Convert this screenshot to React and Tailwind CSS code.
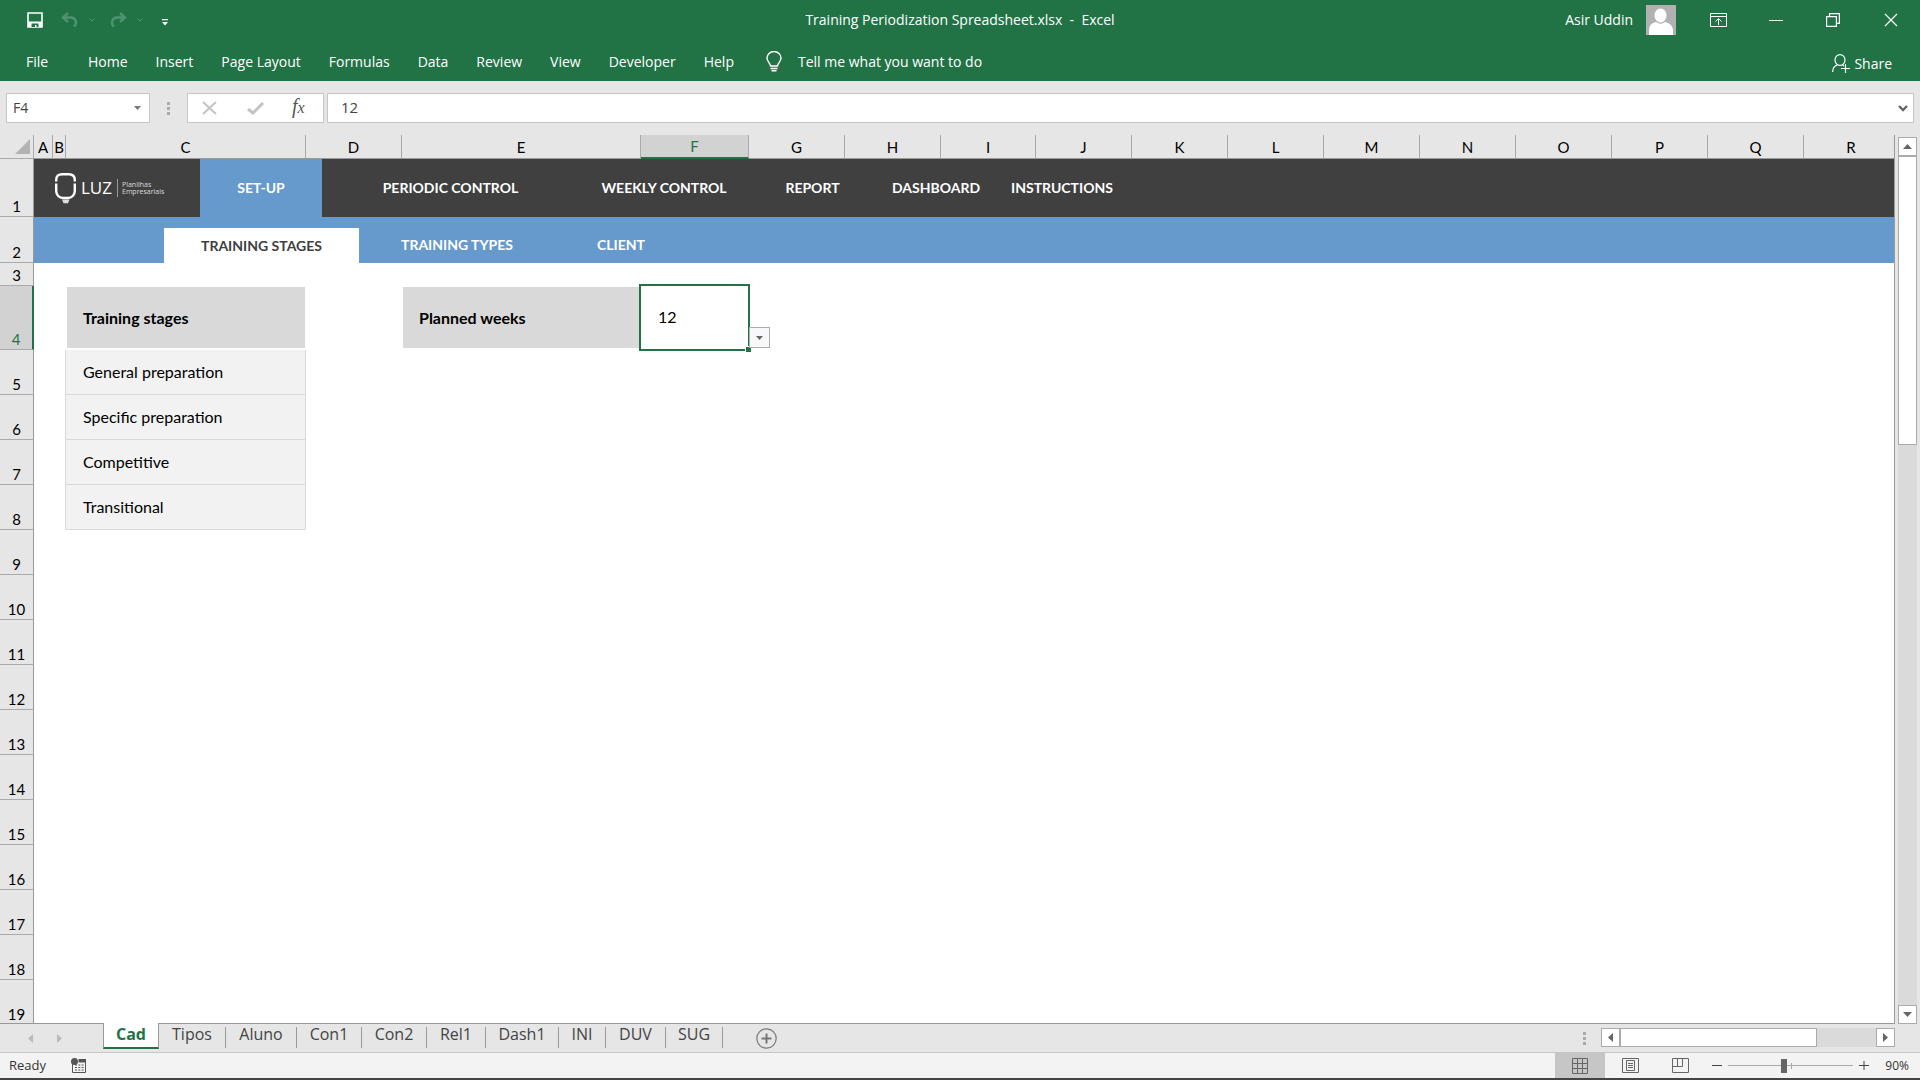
import { useState } from "react";

const menuItems = ["Home", "Insert", "Page Layout", "Formulas", "Data", "Review", "View", "Developer", "Help"];

const columns = [
  { name: "A", width: "w-[19px]" },
  { name: "B", width: "w-[13px]" },
  { name: "C", width: "w-[240px]" },
  { name: "D", width: "w-[96px]" },
  { name: "E", width: "w-[239px]" },
  { name: "F", width: "w-[108px]" },
  { name: "G", width: "w-[96px]" },
  { name: "H", width: "w-[96px]" },
  { name: "I", width: "w-[95px]" },
  { name: "J", width: "w-[96px]" },
  { name: "K", width: "w-[96px]" },
  { name: "L", width: "w-[96px]" },
  { name: "M", width: "w-[96px]" },
  { name: "N", width: "w-[96px]" },
  { name: "O", width: "w-[96px]" },
  { name: "P", width: "w-[96px]" },
  { name: "Q", width: "w-[96px]" },
  { name: "R", width: "" },
];

const mainNav = [
  { label: "SET-UP", className: "w-[122px] bg-[#6699cc]" },
  { label: "PERIODIC CONTROL", className: "w-[257px]" },
  { label: "WEEKLY CONTROL", className: "w-[170px]" },
  { label: "REPORT", className: "w-[127px]" },
  { label: "DASHBOARD", className: "w-[120px]" },
  { label: "INSTRUCTIONS", className: "w-[132px]" },
];

const stages = ["General preparation", "Specific preparation", "Competitive", "Transitional"];

const emptyRows = [9, 10, 11, 12, 13, 14, 15, 16, 17, 18, 19];

const sheets = [
  { name: "Tipos", width: "w-[67px]" },
  { name: "Aluno", width: "w-[71px]" },
  { name: "Con1", width: "w-[65px]" },
  { name: "Con2", width: "w-[65px]" },
  { name: "Rel1", width: "w-[59px]" },
  { name: "Dash1", width: "w-[73px]" },
  { name: "INI", width: "w-[47px]" },
  { name: "DUV", width: "w-[60px]" },
  { name: "SUG", width: "w-[57px]" },
];

const App = () => {
  return (
    <div className="flex h-screen w-full flex-col overflow-hidden bg-[#e6e6e6] font-['Open_Sans',sans-serif] text-sm text-black">
      <TitleBar />
      <Ribbon />
      <FormulaBar />
      <div className="flex min-h-0 flex-1">
        <div className="min-w-0 flex-1 overflow-hidden border-r border-b border-[#999] bg-white">
          <Sheet />
        </div>
        <VerticalScroll />
      </div>
      <SheetTabs />
      <StatusBar />
    </div>
  );
};

const TitleBar = () => (
  <header className="grid h-10 grid-cols-[1fr_auto_1fr] items-center bg-[#217346] text-white">
    {/* Quick access */}
    <div className="flex items-center pl-[27px]">
      <button type="button" aria-label="Save">
        <svg width="16" height="16" viewBox="0 0 16 16" className="block">
          <path d="M1 1h14v14H1z" fill="none" stroke="#fff" strokeWidth="1.6" />
          <path d="M1 9.5h14V15H1z" fill="#fff" />
          <path d="M4.5 11.5h7V15h-2v-2H8v2H4.5z" fill="#217346" />
        </svg>
      </button>
      <button type="button" aria-label="Undo" className="ml-[18px]">
        <svg width="18" height="16" viewBox="0 0 18 16" className="block" fill="none" stroke="#4f9270" strokeWidth="2.4">
          <path d="M7 1 2 5.5 7 10M2.5 5.5H10a5 5 0 0 1 3 9" />
        </svg>
      </button>
      <SmallChevron />
      <button type="button" aria-label="Redo" className="ml-[14px]">
        <svg width="18" height="16" viewBox="0 0 18 16" className="block" fill="none" stroke="#4f9270" strokeWidth="2.4">
          <path d="m11 1 5 4.5L11 10M15.5 5.5H8a5 5 0 0 0-3 9" />
        </svg>
      </button>
      <SmallChevron />
      <button type="button" aria-label="Customize Quick Access Toolbar" className="ml-[19px]">
        <svg width="6" height="7" viewBox="0 0 6 7" className="mt-1 block" fill="#fff">
          <path d="M0 0h6v1.2H0zM0 3h6L3 6.5z" />
        </svg>
      </button>
    </div>
    <h1 className="whitespace-pre">Training Periodization Spreadsheet.xlsx  -  Excel</h1>
    <div className="flex items-center justify-end pr-[22px]">
      <span>Asir Uddin</span>
      <svg width="30" height="30" viewBox="0 0 30 30" className="ml-[13px]">
        <path d="M0 0h30v30H0z" fill="#b1b1b1" />
        <ellipse cx="14.5" cy="10.5" rx="6" ry="7" fill="#fff" />
        <path d="M3 30v-4c0-5 2-8 7-9q4.500 3.500 9 0c5 1 8 4 8 9v4z" fill="#fff" />
      </svg>
      <button type="button" aria-label="Ribbon Display Options" className="ml-[34px]">
        <svg width="17" height="14" viewBox="0 0 17 14" className="block" fill="none" stroke="#fff">
          <path d="M.5.5h16v13H.5zM.5 3.5h16M8.500 12V6M5.500 8.500l3-3 3 3" />
        </svg>
      </button>
      <button type="button" aria-label="Minimize" className="ml-[42px]">
        <svg width="14" height="14" viewBox="0 0 14 14" className="block" stroke="#fff">
          <path d="M0 7.5h14" />
        </svg>
      </button>
      <button type="button" aria-label="Restore Down" className="ml-[43px]">
        <svg width="14" height="14" viewBox="0 0 14 14" className="block" fill="none" stroke="#fff" strokeWidth="1.2">
          <path d="M.6 3.6h9.800v9.800H.6zM3.500 3.600v-3h9.900v9.800h-3" />
        </svg>
      </button>
      <button type="button" aria-label="Close" className="ml-[44px]">
        <svg width="14" height="14" viewBox="0 0 14 14" className="block" stroke="#fff" strokeWidth="1.2">
          <path d="m1 1 12 12M13 1 1 13" />
        </svg>
      </button>
    </div>
  </header>
);

const SmallChevron = () => (
  <svg width="6" height="4" viewBox="0 0 6 4" className="ml-[10px]" fill="none" stroke="#4f9270">
    <path d="m.5.5 2.500 2.500L5.500.5" />
  </svg>
);

const Ribbon = () => (
  <nav className="flex h-[41px] items-center bg-[#217346] pt-[2px] text-white">
    <button type="button" className="w-[74px] text-center">File</button>
    <div className="ml-[14px] flex gap-7">
      {menuItems.map((item) => (
        <button type="button" key={item} className="whitespace-nowrap">
          {item}
        </button>
      ))}
    </div>
    <button type="button" className="ml-8 flex items-center gap-4 whitespace-nowrap">
      <svg width="16" height="21" viewBox="0 0 16 21" fill="none" stroke="#fff" strokeWidth="1.4">
        <path d="M4.500 15c0-3-3.500-4-3.500-8a7 6.500 0 0 1 14 0c0 4-3.500 5-3.500 8zM4.500 17.500h7M5.500 19.800h5" />
      </svg>
      Tell me what you want to do
    </button>
    <button type="button" className="mr-7 ml-auto flex items-center gap-1 pt-1">
      <svg width="18" height="19" viewBox="0 0 18 19" fill="none" stroke="#fff" strokeWidth="1.2">
        <ellipse cx="8" cy="6" rx="5" ry="5.4" />
        <path d="M.6 18c0-4 2-6 4.800-7.200M10.500 11l1.500 1M13.500 10v9M9 14.500h9" />
      </svg>
      Share
    </button>
  </nav>
);

const FormulaBar = () => {
  const [value, setValue] = useState("12");

  return (
    <div className="flex h-[54px] items-center px-[6px] text-[#444]">
      <div className="flex h-[30px] w-36 items-center border border-[#c6c6c6] bg-white pr-2">
        <input aria-label="Name Box" defaultValue="F4" className="w-full min-w-0 pl-[6px] outline-none" />
        <button type="button" aria-label="Open name list">
          <svg width="7" height="4" viewBox="0 0 7 4" fill="#777">
            <path d="M0 0h7L3.500 4z" />
          </svg>
        </button>
      </div>
      <Dots className="ml-[17px]" />
      <div className="ml-[17px] flex h-[30px] w-[137px] items-center border border-[#c6c6c6] bg-white pl-[14px]">
        <button type="button" aria-label="Cancel">
          <svg width="15" height="14" viewBox="0 0 15 14" stroke="#c3c3c3" strokeWidth="2" className="block">
            <path d="m1 1 13 12M14 1 1 13" />
          </svg>
        </button>
        <button type="button" aria-label="Enter" className="ml-[30px]">
          <svg width="17" height="13" viewBox="0 0 17 13" fill="none" stroke="#c3c3c3" strokeWidth="3" className="block">
            <path d="m1 7 5 4L16 1" />
          </svg>
        </button>
        <button
          type="button"
          aria-label="Insert Function"
          className="ml-7 font-['Liberation_Serif',serif] text-xl leading-5 text-[#555] italic"
        >
          f<sub className="bottom-0 text-base">x</sub>
        </button>
      </div>
      <div className="ml-[3px] flex h-[30px] min-w-0 flex-1 items-center border border-[#c6c6c6] bg-white pr-[5px]">
        <input
          aria-label="Formula Bar"
          value={value}
          onChange={(e) => setValue(e.target.value)}
          className="min-w-0 flex-1 pl-[13px] text-[15px] outline-none"
        />
        <button type="button" aria-label="Expand Formula Bar">
          <svg width="10" height="7" viewBox="0 0 10 7" fill="none" stroke="#666" strokeWidth="2.4" className="block">
            <path d="m1 1 4 4 4-4" />
          </svg>
        </button>
      </div>
    </div>
  );
};

const Dots = ({ className }) => (
  <svg width="3" height="13" viewBox="0 0 3 13" fill="#aaa" className={className}>
    <path d="M0 0h3v3H0zM0 5h3v3H0zM0 10h3v3H0z" />
  </svg>
);

const Sheet = () => (
  <table className="w-full table-fixed border-separate border-spacing-0 font-[Lato,sans-serif] text-base leading-5">
    <colgroup>
      <col className="w-[34px]" />
      {columns.map((col) => (
        <col key={col.name} className={col.width} />
      ))}
    </colgroup>
    <thead>
      <tr className="h-6 bg-[#e6e6e6] text-[15px]">
        <th className="border-r border-b border-[#aaa] p-0">
          <svg width="15" height="15" viewBox="0 0 15 15" fill="#b3b3b3" className="mr-[3px] ml-auto block">
            <path d="M15 0v15H0z" />
          </svg>
        </th>
        {columns.map((col) => (
          <th
            key={col.name}
            scope="col"
            className={
              col.name === "F"
                ? "border-r border-b-2 border-r-[#aaa] border-b-[#217346] bg-[#d2d2d2] p-0 font-normal text-[#217346]"
                : "border-b border-[#999] p-0 font-normal not-last:border-r not-last:border-r-[#aaa] last:pl-1"
            }
          >
            {col.name}
          </th>
        ))}
      </tr>
    </thead>
    <tbody>
      <tr className="h-[58px]">
        <RowHeader number={1} />
        <td colSpan={18} className="bg-[#404040] p-0">
          <nav className="flex h-[58px] text-sm font-bold text-white">
            <Logo />
            {mainNav.map((item) => (
              <a
                key={item.label}
                href="#"
                className={`flex shrink-0 items-center justify-center whitespace-nowrap ${item.className}`}
              >
                {item.label}
              </a>
            ))}
          </nav>
        </td>
      </tr>
      <tr className="h-[46px]">
        <RowHeader number={2} />
        <td colSpan={18} className="bg-[#6699cc] p-0">
          <nav className="flex h-[46px] items-end pl-[130px] text-sm font-bold text-white">
            <a href="#" className="flex h-[35px] w-[195px] items-center justify-center bg-white text-[#404040]">
              TRAINING STAGES
            </a>
            <a href="#" className="flex h-[35px] w-[196px] items-center justify-center pb-px">
              TRAINING TYPES
            </a>
            <a href="#" className="flex h-[35px] w-[132px] items-center justify-center pb-px">
              CLIENT
            </a>
          </nav>
        </td>
      </tr>
      <tr className="h-[23px]">
        <RowHeader number={3} />
        <td colSpan={18} />
      </tr>
      <tr className="h-16">
        <RowHeader number={4} active />
        <td colSpan={2} />
        <td className="px-px pt-px pb-[2px] align-top">
          <div className="flex h-[61px] items-center bg-[#d9d9d9] pl-4 font-bold">Training stages</div>
        </td>
        <td />
        <td className="pt-px pr-0 pb-[2px] pl-px align-top">
          <div className="flex h-[61px] items-center bg-[#d9d9d9] pl-4 font-bold">Planned weeks</div>
        </td>
        <td className="relative pt-0 pr-0 pb-[2px] pl-[17px]">
          12
          {/* Selection frame, fill handle and list button */}
          <div className="pointer-events-none absolute -top-[2px] -right-px -bottom-px -left-[2px] border-2 border-[#217346]" />
          <div className="absolute -right-[2px] -bottom-[2px] size-[6px] border-t border-l border-white bg-[#217346]" />
          <button
            type="button"
            aria-label="Choose planned weeks"
            className="absolute bottom-[2px] left-full flex size-[21px] items-center justify-center border border-[#ababab] bg-[#f8f8fa]"
          >
            <svg width="7" height="4" viewBox="0 0 7 4" fill="#666">
              <path d="M0 0h7L3.500 4z" />
            </svg>
          </button>
        </td>
        <td colSpan={12} />
      </tr>
      {stages.map((stage, i) => (
        <tr key={stage} className="h-[45px]">
          <RowHeader number={i + 5} />
          <td colSpan={2} className="border-r border-[#d9d9d9]" />
          <td className="border-r border-b border-[#d9d9d9] bg-[#f2f2f2] py-0 pr-0 pl-[17px]">{stage}</td>
          <td colSpan={15} />
        </tr>
      ))}
      {emptyRows.map((n) => (
        <tr key={n} className="h-[45px]">
          <RowHeader number={n} />
          <td colSpan={18} />
        </tr>
      ))}
    </tbody>
  </table>
);

const RowHeader = ({ number, active }) => (
  <th
    scope="row"
    className={
      active
        ? "border-r-2 border-b border-r-[#217346] border-b-[#aaa] bg-[#d2d2d2] p-0 align-bottom text-[15px] font-normal text-[#217346]"
        : "border-r border-b border-r-[#999] border-b-[#aaa] bg-[#e6e6e6] p-0 align-bottom text-[15px] font-normal"
    }
  >
    {number}
  </th>
);

const Logo = () => (
  <a
    href="#"
    aria-label="LUZ Planilhas Empresariais"
    className="flex w-[166px] shrink-0 items-center pl-[21px] font-['Open_Sans',sans-serif] font-normal"
  >
    <svg width="21" height="31" viewBox="0 0 21 31" fill="none" stroke="#fff" strokeWidth="2.4">
      <path d="M1.200 8.500V7q0-5.800 6-5.800h6.600q6 0 6 5.800v1.500" />
      <path d="M1.200 10.500V18c0 4 3 7 7 7h4.600c4 0 7-3 7-7v-7.500" />
      <path d="M7 26.500h7.500l-1.500 3.700H8.500z" fill="#ddd" stroke="none" />
    </svg>
    <span className="ml-[5px] text-[17px] leading-5 font-medium">LUZ</span>
    <span className="ml-[5px] border-l border-[#999] py-[2px] pl-1 text-[7px] leading-[7px] text-[#ddd]">
      Planilhas
      <br />
      Empresariais
    </span>
  </a>
);

const VerticalScroll = () => (
  <div className="flex w-[25px] flex-col items-center pt-[2px]">
    <ScrollButton label="Scroll up" path="M0 5h9L4.500 0z" />
    <div className="flex w-[19px] flex-1 flex-col bg-[#dadada]">
      <div className="h-[34%] border border-[#ababab] bg-white" />
    </div>
    <ScrollButton label="Scroll down" path="M0 0h9L4.500 5z" />
  </div>
);

const ScrollButton = ({ label, path, tall }) => (
  <button
    type="button"
    aria-label={label}
    className="flex size-[19px] shrink-0 items-center justify-center border border-[#ababab] bg-white"
  >
    <svg width={tall ? 5 : 9} height={tall ? 9 : 5} viewBox={tall ? "0 0 5 9" : "0 0 9 5"} fill="#666">
      <path d={path} />
    </svg>
  </button>
);

const SheetTabs = () => (
  <div className="flex h-[29px] shrink-0 items-start border-b border-[#c6c6c6] text-base leading-5 text-[#444]">
    <div className="flex h-full w-[103px] items-center gap-6 pl-7">
      <svg width="5" height="9" viewBox="0 0 5 9" fill="#bbb">
        <path d="M5 0v9L0 4.500z" />
      </svg>
      <svg width="5" height="9" viewBox="0 0 5 9" fill="#bbb">
        <path d="M0 0v9l5-4.500z" />
      </svg>
    </div>
    <button
      type="button"
      className="-mt-px h-[26px] w-14 border-x border-b-2 border-x-[#999] border-b-[#217346] bg-white pb-[2px] font-bold text-[#217346]"
    >
      Cad
    </button>
    {sheets.map((sheet) => (
      <button
        type="button"
        key={sheet.name}
        className={`mt-[3px] flex h-[21px] items-start justify-center border-r border-[#999] leading-[14px] ${sheet.width}`}
      >
        {sheet.name}
      </button>
    ))}
    <button type="button" aria-label="New sheet" className="mt-1 ml-[33px]">
      <svg width="21" height="21" viewBox="0 0 21 21" fill="none" stroke="#777" className="block">
        <circle cx="10.5" cy="10.5" r="9.7" strokeWidth="1.2" />
        <path d="M10.500 5.500v10M5.500 10.500h10" strokeWidth="2" />
      </svg>
    </button>
    <Dots className="mt-2 ml-auto" />
    <div className="mt-1 mr-[25px] ml-[15px] flex w-[294px]">
      <ScrollButton label="Scroll left" path="M5 0v9L0 4.500z" tall />
      <div className="flex flex-1 bg-[#dadada]">
        <div className="w-[77%] border border-[#ababab] bg-white" />
      </div>
      <ScrollButton label="Scroll right" path="M0 0v9l5-4.500z" tall />
    </div>
  </div>
);

const StatusBar = () => (
  <footer className="flex h-[27px] shrink-0 items-center border-b-2 border-[#444] bg-[#f3f3f3] pr-[11px] pl-[9px] text-xs text-[#333]">
    <span className="text-[13px]">Ready</span>
    <button type="button" aria-label="Record macro" className="ml-[25px]">
      <svg width="15" height="15" viewBox="0 0 15 15" className="block">
        <path d="M1.500 5v9.500h13V2" fill="none" stroke="#555" />
        <path d="M7.500 1H15v3.500H7.500z" fill="#555" />
        <circle cx="3.5" cy="3.5" r="3.5" fill="#555" />
        <path d="M4 7h9M4 9.500h9M4 12h9" stroke="#555" strokeDasharray="2 1.3" />
      </svg>
    </button>
    <div className="ml-auto flex h-full">
      <button type="button" aria-label="Normal view" className="flex w-[50px] items-center justify-center bg-[#c6c6c6]">
        <svg width="16" height="16" viewBox="0 0 16 16" fill="none" stroke="#666">
          <path d="M.5.5h15v15H.5zM5.500.5v15M10.500.5v15M.5 5.500h15M.5 10.500h15" />
        </svg>
      </button>
      <button type="button" aria-label="Page Layout view" className="flex w-[50px] items-center justify-center">
        <svg width="17" height="15" viewBox="0 0 17 15" fill="none" stroke="#666">
          <path d="M.5.5h16v14H.5zM4.500 2.500h8v10h-8zM6 5.500h5M6 7.500h5M6 9.500h5" />
        </svg>
      </button>
      <button type="button" aria-label="Page Break Preview" className="flex w-[50px] items-center justify-center">
        <svg width="17" height="15" viewBox="0 0 17 15" fill="none" stroke="#666">
          <path d="M.5.5h16v14H.5zM.5 8.500h10v-8M5.500.5v8" />
        </svg>
      </button>
    </div>
    <button type="button" aria-label="Zoom out" className="ml-[7px]">
      <svg width="10" height="10" viewBox="0 0 10 10" stroke="#444" className="block">
        <path d="M0 4.500h10" />
      </svg>
    </button>
    <div className="relative mx-[6px] flex h-full w-[125px] items-center">
      <input
        type="range"
        aria-label="Zoom"
        min="10"
        max="190"
        defaultValue="90"
        className="h-px w-full appearance-none bg-[#aaa] [&::-webkit-slider-thumb]:h-[14px] [&::-webkit-slider-thumb]:w-[6px] [&::-webkit-slider-thumb]:appearance-none [&::-webkit-slider-thumb]:bg-[#666]"
      />
      <div className="pointer-events-none absolute left-1/2 h-[6px] w-px bg-[#aaa]" />
    </div>
    <button type="button" aria-label="Zoom in">
      <svg width="10" height="10" viewBox="0 0 10 10" stroke="#444" className="block">
        <path d="M0 4.500h10M5 0v9" />
      </svg>
    </button>
    <span className="ml-[14px] w-[26px] text-right">90%</span>
  </footer>
);

export default App;
